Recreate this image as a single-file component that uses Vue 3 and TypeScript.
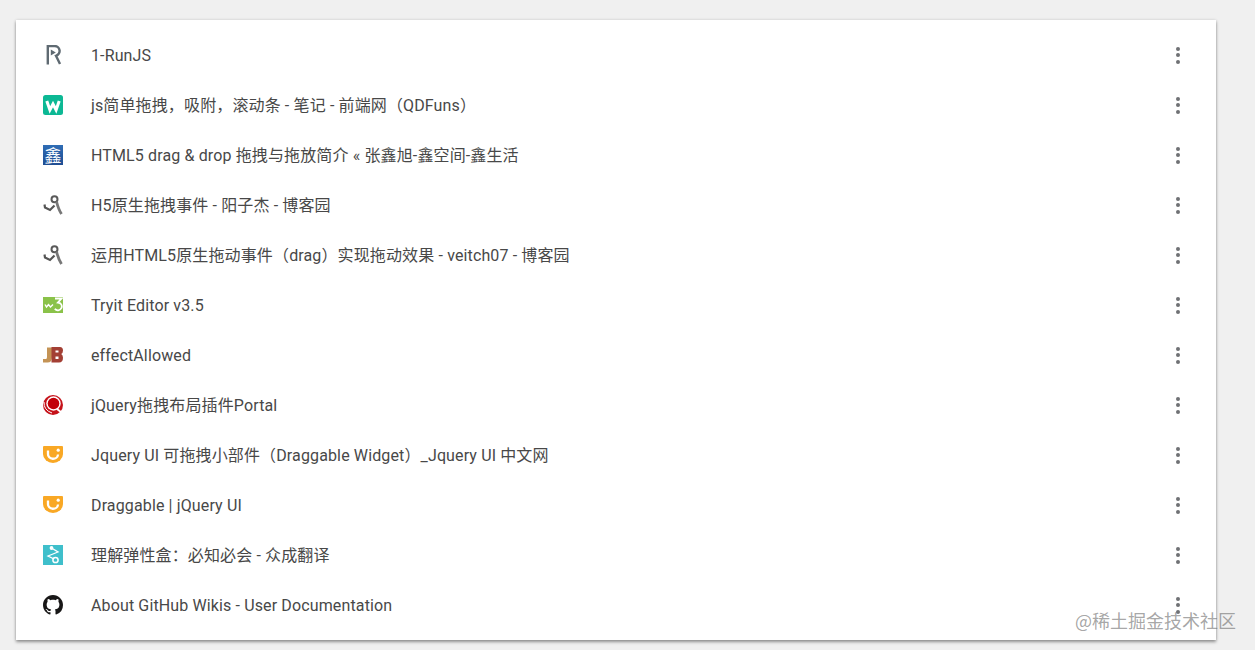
<script setup lang="ts">
interface Row { title: string; icon: string }
const rows: Row[] = [
  { title: '1-RunJS', icon: 'runjs' },
  { title: 'js简单拖拽\uFF0C吸附\uFF0C滚动条 - 笔记 - 前端网\uFF08QDFuns\uFF09', icon: 'qd' },
  { title: 'HTML5 drag & drop 拖拽与拖放简介 « 张鑫旭-鑫空间-鑫生活', icon: 'xin' },
  { title: 'H5原生拖拽事件 - 阳子杰 - 博客园', icon: 'cnblogs' },
  { title: '运用HTML5原生拖动事件\uFF08drag\uFF09实现拖动效果 - veitch07 - 博客园', icon: 'cnblogs' },
  { title: 'Tryit Editor v3.5', icon: 'w3' },
  { title: 'effectAllowed', icon: 'jb' },
  { title: 'jQuery拖拽布局插件Portal', icon: 'red' },
  { title: 'Jquery UI 可拖拽小部件\uFF08Draggable Widget\uFF09_Jquery UI 中文网', icon: 'ui' },
  { title: 'Draggable | jQuery UI', icon: 'ui' },
  { title: '理解弹性盒\uFF1A必知必会 - 众成翻译', icon: 'zc' },
  { title: 'About GitHub Wikis - User Documentation', icon: 'github' }
]
</script>

<template>
  <div class="page">
    <ul class="card">
      <li v-for="(row, i) in rows" :key="i" class="row">
        <span class="icon">
          <svg v-if="row.icon === 'runjs'" viewBox="0 0 20 20" width="20" height="20">
            <path d="M4.800 19.500V1h6.700a5 5 0 0 1 1.500 9.800L17 19" fill="none" stroke="#5f6a72" stroke-width="2.400" />
            <path d="M7.800 4.500l5 3-5 3z" fill="#5f6a72" />
          </svg>
          <svg v-else-if="row.icon === 'qd'" viewBox="0 0 20 20" width="20" height="20">
            <rect width="20" height="20" rx="2.500" fill="#0cb894" />
            <path d="M3.800 6l3.100 9L10 9l3.100 6 3.100-9" fill="none" stroke="#fff" stroke-width="3" />
          </svg>
          <span v-else-if="row.icon === 'xin'" class="xin">鑫</span>
          <svg v-else-if="row.icon === 'cnblogs'" viewBox="0 0 20 20" width="20" height="20">
            <path d="M1.500 9.500l.5 3 5 2.500 4.500-4.500" fill="none" stroke="#555" stroke-width="2.200" />
            <circle cx="11.500" cy="4.200" r="3" fill="none" stroke="#5a5a5a" stroke-width="2" />
            <path d="M13.500 6.500c1 4 2 8 5 12.500" fill="none" stroke="#777" stroke-width="2.800" />
          </svg>
          <svg v-else-if="row.icon === 'w3'" viewBox="0 0 20 20" width="20" height="20">
            <rect y="2" width="20" height="16" fill="#8ac249" />
            <path d="M2 9.500l1.500 2.500 2-2.500 2 2.500 2.500-2.500" fill="none" stroke="#fff" stroke-width="1.400" />
            <path d="M12 3.500h6.500l-3.500 4a3.900 3.900 0 1 1-3.200 6.300" fill="none" stroke="#fff" stroke-width="1.800" />
          </svg>
          <svg v-else-if="row.icon === 'jb'" viewBox="0 0 20 20" width="20" height="20">
            <path d="M4 2.500h5V12q0 5.500-4.500 5.500H0V14h3q1 0 1-2z" fill="#c49355" />
            <path d="M8.500 2H17q3 0 3 3.500 0 2.500-1.800 3.500 1.800 1 1.800 3.800 0 4.700-4 4.700H8.500zM12.500 5.500v2h3v-2zM12.500 11.500v2.500h3v-2.500z" fill="#a33f34" fill-rule="evenodd" />
          </svg>
          <svg v-else-if="row.icon === 'red'" viewBox="0 0 20 20" width="20" height="20">
            <circle cx="10" cy="10" r="10" fill="#c5121a" />
            <circle cx="10.500" cy="8.500" r="7.200" fill="#fff" />
            <circle cx="10.500" cy="8.500" r="5.800" fill="#c20009" />
            <path d="M1 7q-.5 8 8 11" fill="none" stroke="#fff" stroke-width="1" />
            <path d="M14 14l4.500 3.500" stroke="#fff" stroke-width="1.800" />
          </svg>
          <svg v-else-if="row.icon === 'ui'" viewBox="0 0 20 20" width="20" height="20">
            <path d="M1 1h18a1 1 0 0 1 1 1v7a10 9 0 0 1-20 0V2a1 1 0 0 1 1-1z" fill="#f9a825" />
            <path d="M5 5.500v3.500a5 4.500 0 0 0 10 .5" fill="none" stroke="#fff" stroke-width="2.300" />
            <circle cx="15.200" cy="5.200" r="1.600" fill="#fff" />
          </svg>
          <svg v-else-if="row.icon === 'zc'" viewBox="0 0 20 20" width="20" height="20">
            <rect width="20" height="20" fill="#3fbfcb" />
            <circle cx="8.500" cy="3" r="1.900" fill="#fff" />
            <path d="M8.500 3L15 7 5 11l6 3" fill="none" stroke="#fff" stroke-width="1.300" />
            <circle cx="12.500" cy="15" r="2.600" fill="none" stroke="#fff" stroke-width="1.500" />
          </svg>
          <svg v-else viewBox="0 0 16 16" width="20" height="20">
            <path fill="#181717" fill-rule="evenodd" d="M8 0C3.580 0 0 3.580 0 8c0 3.540 2.290 6.530 5.470 7.590.4.070.55-.17.55-.38 0-.19-.01-.82-.01-1.490-2.010.37-2.530-.49-2.690-.94-.09-.23-.48-.94-.82-1.130-.28-.15-.68-.52-.01-.53.630-.01 1.080.58 1.230.82.720 1.210 1.870.87 2.330.66.070-.52.280-.87.510-1.070-1.780-.2-3.640-.89-3.640-3.950 0-.87.310-1.590.820-2.150-.08-.2-.36-1.020.08-2.120 0 0 .67-.21 2.200.82.640-.18 1.320-.27 2-.27s1.360.09 2 .27c1.530-1.040 2.200-.82 2.200-.82.440 1.100.16 1.920.08 2.120.51.560.82 1.270.82 2.150 0 3.070-1.870 3.750-3.650 3.950.29.250.54.730.54 1.480 0 1.070-.01 1.930-.01 2.200 0 .21.150.46.550.38A8.010 8.010 0 0 0 16 8c0-4.420-3.580-8-8-8z" />
          </svg>
        </span>
        <span class="title">{{ row.title }}</span>
        <span class="more" aria-label="更多"><i></i><i></i><i></i></span>
      </li>
    </ul>
    <span class="mark">@稀土掘金技术社区</span>
  </div>
</template>

<style scoped>
.page {
  box-sizing: border-box;
  position: relative;
  width: 1255px;
  height: 650px;
  padding: 20px 39px 10px 16px;
  background: #f0f0f0;
  overflow: hidden;
}
.card {
  box-sizing: border-box;
  height: 620px;
  margin: 0;
  padding: 10px 0;
  list-style: none;
  background: #fff;
  box-shadow: 0 2px 3px rgba(0, 0, 0, 0.38), 0 0 3px rgba(0, 0, 0, 0.12);
}
.row {
  display: flex;
  align-items: center;
  height: 50px;
  padding: 0 35px 0 27px;
}
.icon {
  flex: none;
  display: flex;
  width: 20px;
  height: 20px;
  margin-right: 28px;
}
.xin {
  display: block;
  width: 20px;
  height: 20px;
  font: 17px/20px "Noto Sans CJK SC", sans-serif;
  text-align: center;
  color: #fff;
  background: linear-gradient(#2f6db5, #1f4d92);
}
.title {
  flex: 1;
  padding-top: 2px;
  font-family: Roboto, "Noto Sans CJK SC", sans-serif;
  font-size: 16px;
  line-height: 20px;
  letter-spacing: 0.13px;
  color: #484848;
  white-space: nowrap;
}
.more {
  flex: none;
  display: flex;
  flex-direction: column;
  align-items: center;
  gap: 2.5px;
  width: 6px;
}
.more i {
  display: block;
  width: 4px;
  height: 4px;
  border-radius: 50%;
  background: #6f7174;
}
.mark {
  position: absolute;
  left: 1075px;
  top: 609px;
  font-family: "Noto Sans CJK SC", sans-serif;
  font-size: 18px;
  line-height: 22px;
  color: rgba(110, 110, 110, 0.62);
  white-space: nowrap;
}
</style>
